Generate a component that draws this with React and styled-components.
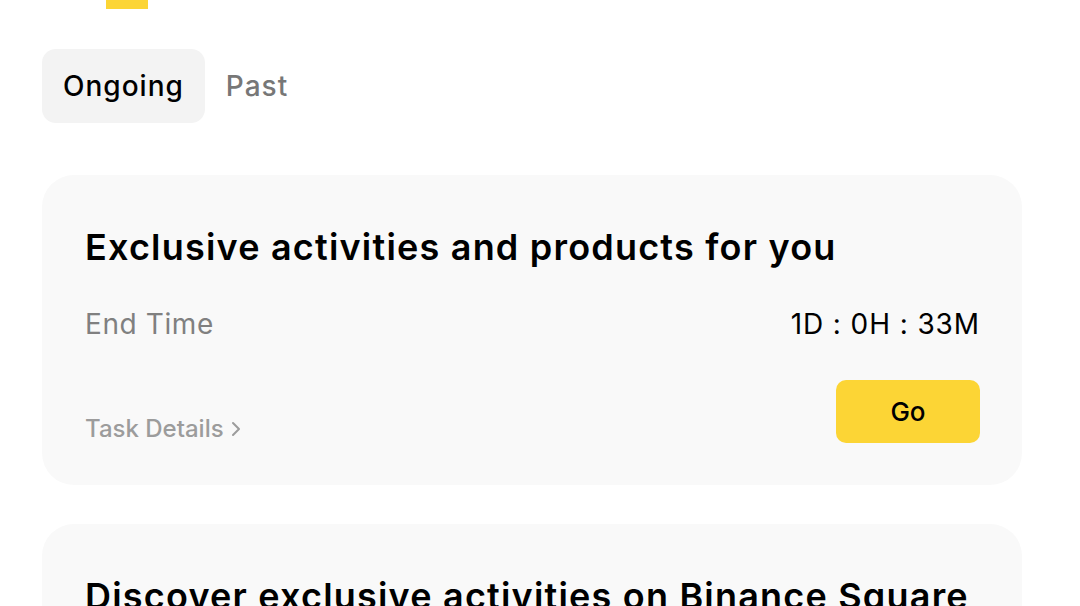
import React from "react";
import styled, { createGlobalStyle } from "styled-components";

const Global = createGlobalStyle`
  html, body { margin: 0; padding: 0; background: #fff; }
  body { font-family: Inter, "Noto Sans", sans-serif; color: #000; overflow: hidden; }
`;

const Page = styled.div`
  width: 1080px;
  height: 606px;
  overflow: hidden;
  display: flex;
  flex-direction: column;
  & > * { flex-shrink: 0; }
`;

const Indicator = styled.div`
  width: 42px;
  height: 9px;
  margin-left: 106px;
  background: #fcd535;
`;

const Tabs = styled.div`
  display: flex;
  margin: 40px 0 0 42px;
`;

const Tab = styled.div`
  height: 74px;
  padding: 0 21px;
  border-radius: 14px;
  display: flex;
  align-items: center;
  font-size: 28px;
  font-weight: 500;
  letter-spacing: 1px;
  color: ${p => (p.$active ? "#000" : "#777")};
  background: ${p => (p.$active ? "#f3f3f3" : "transparent")};
`;

const List = styled.div`
  display: flex;
  flex-direction: column;
  gap: 39px;
  margin: 52px 58px 0 42px;
  & > * { flex-shrink: 0; }
`;

const Card = styled.div`
  background: #f9f9f9;
  border-radius: 32px;
  padding: 50px 42px 42px 43px;
  display: flex;
  flex-direction: column;
`;

const Title = styled.div`
  font-size: 36px;
  font-weight: 600;
  line-height: 44px;
  letter-spacing: 1.2px;
  white-space: nowrap;
`;

const Row = styled.div`
  display: flex;
  justify-content: space-between;
  align-items: center;
  margin-top: ${p => p.$mt || 0}px;
`;

const Label = styled.div`
  font-size: 28px;
  color: #808080;
  line-height: 36px;
  letter-spacing: 0.6px;
`;

const Timer = styled.div`
  font-size: 28px;
  color: #000;
  line-height: 36px;
  letter-spacing: 0.9px;
`;

const Details = styled.div`
  font-size: 24px;
  font-weight: 500;
  color: #9c9c9c;
  display: flex;
  align-items: center;
  gap: 6px;
  padding-top: 34px;
`;

const GoButton = styled.button`
  width: 144px;
  height: 63px;
  border: none;
  border-radius: 10px;
  background: #fcd535;
  font-family: inherit;
  font-size: 26px;
  font-weight: 500;
  color: #000;
`;

export default function App() {
  return (
    <Page>
      <Global />
      <Indicator />
      <Tabs>
        <Tab $active>Ongoing</Tab>
        <Tab>Past</Tab>
      </Tabs>
      <List>
        <Card>
          <Title>Exclusive activities and products for you</Title>
          <Row $mt={37}>
            <Label>End Time</Label>
            <Timer>1D : 0H : 33M</Timer>
          </Row>
          <Row $mt={38}>
            <Details>
              Task Details
              <svg width="12" height="18" viewBox="0 0 12 18" fill="none">
                <path d="M3 3l6 6-6 6" stroke="#9c9c9c" strokeWidth="2" strokeLinecap="round" strokeLinejoin="round" />
              </svg>
            </Details>
            <GoButton>Go</GoButton>
          </Row>
        </Card>
        <Card>
          <Title>Discover exclusive activities on Binance Square</Title>
        </Card>
      </List>
    </Page>
  );
}
